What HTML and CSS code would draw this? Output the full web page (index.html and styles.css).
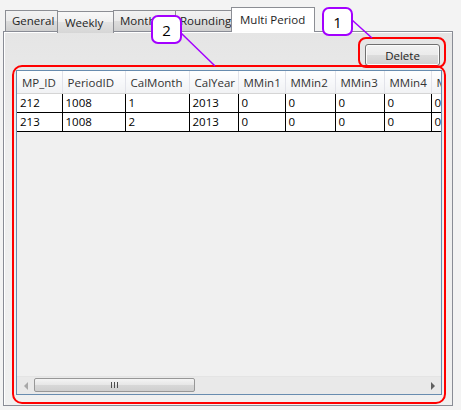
FILE: index.html
```html
<!DOCTYPE html>
<html lang="en">

<head>
    <meta charset="UTF-8">
    <title>Multi Period</title>
    <link rel="stylesheet" href="styles.css">
</head>

<body>

    <div class="tabs">
        <div class="tab tab-general">General</div>
        <div class="tab tab-weekly hover">Weekly</div>
        <div class="tab tab-monthly">Monthly</div>
        <div class="tab tab-rounding">Rounding</div>
        <div class="tab tab-multi active">Multi Period</div>
    </div>

    <div class="panel">
        <div class="toolbar">
            <button class="btn">Delete</button>
        </div>

        <div class="grid">
            <div class="grid-body">
                <table>
                    <colgroup>
                        <col style="width:45px">
                        <col style="width:63px">
                        <col style="width:64px">
                        <col style="width:49px">
                        <col style="width:47px">
                        <col style="width:50px">
                        <col style="width:49px">
                        <col style="width:47px">
                        <col style="width:47px">
                    </colgroup>
                    <thead>
                        <tr>
                            <th>MP_ID</th>
                            <th>PeriodID</th>
                            <th>CalMonth</th>
                            <th>CalYear</th>
                            <th>MMin1</th>
                            <th>MMin2</th>
                            <th>MMin3</th>
                            <th>MMin4</th>
                            <th>MMin5</th>
                        </tr>
                    </thead>
                    <tbody>
                        <tr>
                            <td>212</td>
                            <td>1008</td>
                            <td>1</td>
                            <td>2013</td>
                            <td>0</td>
                            <td>0</td>
                            <td>0</td>
                            <td>0</td>
                            <td>0</td>
                        </tr>
                        <tr>
                            <td>213</td>
                            <td>1008</td>
                            <td>2</td>
                            <td>2013</td>
                            <td>0</td>
                            <td>0</td>
                            <td>0</td>
                            <td>0</td>
                            <td>0</td>
                        </tr>
                    </tbody>
                </table>
            </div>

            <div class="hscroll">
                <span class="arrow left"></span>
                <div class="track">
                    <div class="thumb"><span class="grip"></span></div>
                </div>
                <span class="arrow right"></span>
            </div>
        </div>
    </div>

    <!-- annotation overlay -->
    <div class="ring ring-btn"></div>
    <div class="ring ring-grid"></div>

    <svg class="leaders" width="461" height="410">
        <line x1="352" y1="20" x2="372" y2="38" />
        <line x1="181" y1="33" x2="215" y2="66" />
    </svg>

    <div class="callout callout-1">1</div>
    <div class="callout callout-2">2</div>

</body>

</html>
```

FILE: styles.css
```css
body {
    margin: 0;
    background: #f3f3f3;
    font-family: 'Open Sans', 'Noto Sans', sans-serif;
    font-size: 11.5px;
    color: #1e1e1e;
    width: 461px;
    height: 410px;
    overflow: hidden;
    position: relative;
}

/* tab strip */

.tabs {
    display: flex;
    align-items: flex-end;
    height: 31px;
    padding-left: 5px;
    position: relative;
    z-index: 2;
}

.tab {
    height: 20px;
    line-height: 19px;
    padding: 0 0 0 6px;
    box-sizing: content-box;
    border: 1px solid #8c8e94;
    border-bottom: none;
    margin-right: -1px;
    white-space: nowrap;
    overflow: hidden;
    background: linear-gradient(#f2f2f2, #ebebeb 50%, #dddddd 50%, #cfcfcf);
}

.tab-general { width: 45px; }
.tab-weekly { width: 48px; padding-left: 7px; }
.tab-monthly { width: 55px; }
.tab-rounding { width: 51px; padding-left: 4px; }
.tab-multi { width: 74px; padding-left: 8px; }

.tab.hover {
    height: 21px;
    line-height: 22px;
    margin-bottom: -2px;
    background: linear-gradient(#f8f8f8, #efefef 50%, #e3e3e3 50%, #d6d6d6);
}

.tab.active {
    height: 24px;
    line-height: 24px;
    margin-bottom: -1px;
    background: #ffffff;
    position: relative;
}

/* tab content */

.panel {
    margin-left: 3px;
    width: 450px;
    height: 375px;
    border: 1px solid #898c95;
    box-shadow: inset 1px 1px 0 #ffffff;
    background: linear-gradient(#e5e5e5, #eeeeee 30%, #f0f0f0);
    padding: 12px 12px 0 12px;
    box-sizing: border-box;
    display: flex;
    flex-direction: column;
}

.toolbar {
    display: flex;
    justify-content: flex-end;
    height: 22px;
    margin-bottom: 4px;
}

.btn {
    width: 75px;
    height: 22px;
    padding: 0;
    border: 1px solid #707070;
    border-radius: 3px;
    background: linear-gradient(#f2f2f2, #ebebeb 50%, #dddddd 50%, #cfcfcf);
    font-family: inherit;
    font-size: 11.5px;
    color: #1e1e1e;
    box-shadow: inset 0 0 0 1px #fcfcfc;
}

/* data grid */

.grid {
    width: 426px;
    height: 325px;
    border: 1px solid #688caf;
    box-sizing: border-box;
    background: #f0f0f0;
    display: flex;
    flex-direction: column;
}

.grid-body {
    flex: 1;
    overflow: hidden;
}

table {
    border-collapse: collapse;
    table-layout: fixed;
    width: 461px;
}

th {
    height: 22px;
    padding: 0 0 0 5px;
    text-align: left;
    font-weight: normal;
    color: #333333;
    white-space: nowrap;
    overflow: hidden;
    background: linear-gradient(#ffffff, #f7f8fa 50%, #f1f2f4);
    border-right: 1px solid #e2e3ea;
    border-bottom: 1px solid #d5d5d5;
}

td {
    height: 18px;
    padding: 0 0 0 3px;
    background: #ffffff;
    color: #000000;
    border-right: 1px solid #000000;
    border-bottom: 1px solid #000000;
    white-space: nowrap;
    overflow: hidden;
    line-height: 18px;
}

.hscroll {
    height: 17px;
    display: flex;
    align-items: center;
    background: #e9e9e9;
    border-top: 1px solid #e4e4e4;
}

.arrow {
    width: 17px;
    display: flex;
    justify-content: center;
}

.arrow.left::before {
    content: "";
    border-top: 4px solid transparent;
    border-bottom: 4px solid transparent;
    border-right: 4px solid #a8a8a8;
}

.arrow.right::before {
    content: "";
    border-top: 4px solid transparent;
    border-bottom: 4px solid transparent;
    border-left: 4px solid #606060;
}

.track {
    flex: 1;
    height: 15px;
}

.thumb {
    width: 161px;
    height: 14px;
    border: 1px solid #979797;
    border-radius: 2px;
    box-sizing: border-box;
    background: linear-gradient(#f4f4f4, #e6e6e6 50%, #d8d8d8 50%, #cfcfcf);
    display: flex;
    justify-content: center;
    align-items: center;
}

.grip {
    width: 7px;
    height: 6px;
    background: repeating-linear-gradient(90deg, #4d4d4d 0 1px, transparent 1px 3px);
}

/* annotations */

.ring {
    position: absolute;
    border: 2px solid #ff0000;
    box-sizing: border-box;
    z-index: 3;
}

.ring-btn {
    left: 358px;
    top: 37px;
    width: 88px;
    height: 31px;
    border-radius: 8px;
}

.ring-grid {
    left: 12px;
    top: 65px;
    width: 434px;
    height: 339px;
    border-radius: 10px;
}

.leaders {
    position: absolute;
    left: 0;
    top: 0;
    z-index: 4;
}

.leaders line {
    stroke: #a300ff;
    stroke-width: 1.5;
}

.callout {
    position: absolute;
    width: 31px;
    height: 29px;
    border: 2px solid #a300ff;
    border-radius: 7px;
    background: #ffffff;
    box-sizing: border-box;
    display: flex;
    justify-content: center;
    align-items: center;
    font-size: 15px;
    color: #000000;
    z-index: 5;
}

.callout-1 {
    left: 322px;
    top: 7px;
}

.callout-2 {
    left: 151px;
    top: 15px;
}
```
